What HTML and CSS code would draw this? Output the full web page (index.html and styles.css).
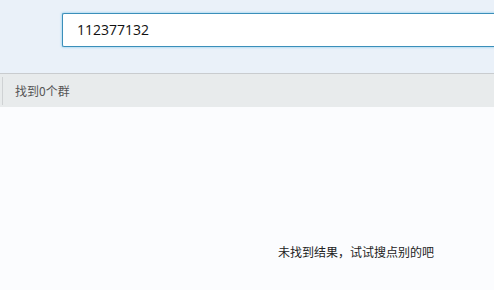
FILE: index.html
```html
<!DOCTYPE html>
<html lang="zh">
<head>
<meta charset="utf-8">
<link rel="stylesheet" href="styles.css">
</head>
<body>
<div class="page">
  <div class="top">
    <div class="search">112377132</div>
  </div>
  <div class="bar">
    <span class="divider"></span>
    <span class="count">找到0个群</span>
  </div>
  <div class="empty">
    <span class="empty-text">未找到结果，试试搜点别的吧</span>
  </div>
</div>
</body>
</html>
```
FILE: styles.css
```css
html, body {
  margin: 0;
  padding: 0;
}
body {
  width: 494px;
  height: 290px;
  overflow: hidden;
  background: #fbfcfe;
  font-family: "Noto Sans CJK SC", "Noto Sans", sans-serif;
}
.page {
  display: flex;
  flex-direction: column;
  height: 290px;
}
.top {
  box-sizing: border-box;
  height: 73px;
  background: #eaf1f9;
  padding: 13px 0 0 62px;
}
.search {
  box-sizing: border-box;
  height: 34px;
  background: #ffffff;
  border: 1px solid #3b8fba;
  border-right: none;
  border-radius: 2px 0 0 2px;
  box-shadow: 0 0 2px 1px #b8def2;
  padding-left: 14px;
  font-family: "Open Sans", "Noto Sans", sans-serif;
  font-size: 14px;
  line-height: 31px;
  color: #111;
}
.bar {
  box-sizing: border-box;
  height: 34px;
  border-top: 1px solid #c9cccf;
  background: #e8ebec;
  display: flex;
  align-items: center;
  padding-left: 2px;
}
.divider {
  width: 1px;
  height: 28px;
  background: #cfd2d4;
}
.count {
  margin-left: 12px;
  font-size: 12px;
  color: #555;
  line-height: 16px;
  margin-top: 1px;
}
.empty {
  flex: 1;
  padding: 131px 0 0 278px;
  background: #fbfcfe;
}
.empty-text {
  font-size: 12px;
  line-height: 16px;
  color: #222;
}
```
